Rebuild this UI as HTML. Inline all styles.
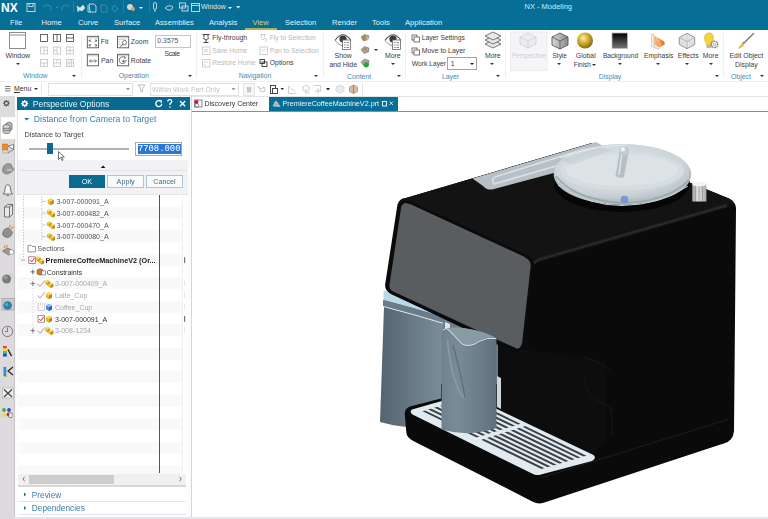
<!DOCTYPE html>
<html><head><meta charset="utf-8">
<style>
*{margin:0;padding:0;box-sizing:border-box}
html,body{width:768px;height:519px;overflow:hidden}
body{position:relative;font-family:"Liberation Sans",sans-serif;background:#fff;color:#333}
.a{position:absolute}
.t{position:absolute;white-space:nowrap;line-height:10px;height:10px}
svg{position:absolute;overflow:visible}
.rb{font-size:6.9px;color:#3c3c3c}
.dim{color:#b9b9b9}
.gl{font-size:6.9px;color:#3b8db3}
.tab{font-size:7.6px;color:#e6f0f4;top:18px}
.nv{font-size:7px;color:#333}
.ng{color:#a3a3a3}
.ar{position:absolute;width:0;height:0;border-left:2.2px solid transparent;border-right:2.2px solid transparent;border-top:2.6px solid #333}
.sep{position:absolute;width:1px;background:#efefef}
.wrapblur{position:absolute;left:0;top:0;width:768px;height:519px;filter:blur(0.3px)}
</style></head><body><div class="wrapblur">

<!-- ===== Title + tabs bar ===== -->
<div class="a" style="left:-4px;top:-4px;width:776px;height:34px;background:#076e96"></div>
<div class="t" style="left:1px;top:2px;font-size:12px;line-height:12px;height:12px;font-weight:bold;color:#fff">NX</div>
<div class="t" style="left:201px;top:2px;font-size:7px;color:#d8e8ef">Window</div>
<div class="t" style="left:524.5px;top:2px;font-size:7.5px;color:#d8e8ef">NX - Modeling</div>

<div class="t tab" style="left:10px">File</div>
<div class="t tab" style="left:41.5px">Home</div>
<div class="t tab" style="left:78px">Curve</div>
<div class="t tab" style="left:114px">Surface</div>
<div class="t tab" style="left:155px">Assemblies</div>
<div class="t tab" style="left:209px">Analysis</div>
<div class="t tab" style="left:252.5px;color:#d9cf7e">View</div>
<div class="t tab" style="left:285px">Selection</div>
<div class="t tab" style="left:332px">Render</div>
<div class="t tab" style="left:372px">Tools</div>
<div class="t tab" style="left:405px">Application</div>
<div class="a" style="left:245px;top:28px;width:32px;height:2px;background:#b3ad5c"></div>

<!-- ===== Ribbon ===== -->
<div class="a" style="left:0;top:30px;width:768px;height:52px;background:#fff;border-bottom:1px solid #eeedf0"></div>


<!-- Window group -->
<svg style="left:0;top:0" width="768" height="82">
 <rect x="9.5" y="32.5" width="16" height="16" fill="#fff" stroke="#8c8c8c" stroke-width="1"/>
 <line x1="9.5" y1="35" x2="25.5" y2="35" stroke="#8c8c8c" stroke-width="1"/>
 <g fill="#fff" stroke="#5a5a5a" stroke-width="0.9">
  <rect x="40.5" y="34.5" width="7" height="7"/><rect x="53.5" y="34.5" width="7" height="7"/><line x1="57" y1="34.5" x2="57" y2="41.5"/>
  <rect x="66.5" y="34.5" width="7" height="7"/><line x1="66.5" y1="38" x2="73.5" y2="38"/>
 </g>
 <g fill="#fff" stroke="#c9c9c9" stroke-width="0.9">
  <rect x="40.5" y="47" width="7" height="7"/><line x1="44" y1="47" x2="44" y2="54"/><line x1="44" y1="50.5" x2="47.5" y2="50.5"/>
  <rect x="53.5" y="47" width="7" height="7"/><line x1="57" y1="47" x2="57" y2="54"/><line x1="53.5" y1="50.5" x2="57" y2="50.5"/>
  <rect x="66.5" y="47" width="7" height="7"/><line x1="70" y1="47" x2="70" y2="54"/><line x1="66.5" y1="50.5" x2="73.5" y2="50.5"/>
  <rect x="40.5" y="59.5" width="7" height="7"/><line x1="40.5" y1="63" x2="47.5" y2="63"/><line x1="44" y1="63" x2="44" y2="66.5"/>
  <rect x="53.5" y="59.5" width="7" height="7"/><line x1="53.5" y1="63" x2="60.5" y2="63"/><line x1="57" y1="59.5" x2="57" y2="63"/>
  <rect x="66.5" y="59.5" width="7" height="7"/><line x1="69" y1="59.5" x2="69" y2="66.5"/><line x1="71.5" y1="59.5" x2="71.5" y2="66.5"/><line x1="66.5" y1="63" x2="73.5" y2="63"/>
 </g>
 <!-- Operation icons -->
 <g fill="#fff" stroke="#555" stroke-width="0.9">
  <rect x="87.3" y="36.3" width="11.2" height="11.5"/>
  <rect x="87.3" y="54.3" width="11.2" height="11.5"/>
  <rect x="117.5" y="36.3" width="11.2" height="11.5"/>
  <rect x="117.5" y="54.3" width="11.2" height="11.5"/>
 </g>
 <g stroke="#9a9a9a" stroke-width="0.6">
  <line x1="87.3" y1="37.8" x2="98.5" y2="37.8"/><line x1="87.3" y1="55.8" x2="98.5" y2="55.8"/>
  <line x1="117.5" y1="37.8" x2="128.7" y2="37.8"/><line x1="117.5" y1="55.8" x2="128.7" y2="55.8"/>
 </g>
 <g fill="none" stroke="#555" stroke-width="0.8">
  <path d="M89.2 40 l2 2 M89.2 40 h1.6 M89.2 40 v1.6 M96.6 40 l-2 2 M96.6 40 h-1.6 M96.6 40 v1.6 M89.2 46 l2 -2 M89.2 46 h1.6 M89.2 46 v-1.6 M96.6 46 l-2 -2 M96.6 46 h-1.6 M96.6 46 v-1.6"/>
  <path d="M89.5 61 h7 M89.5 61 l1.6 -1.6 M89.5 61 l1.6 1.6 M96.5 61 l-1.6 -1.6 M96.5 61 l-1.6 1.6"/>
  <path d="M126 60 a3.4 3.4 0 1 1 -1.5 -2.6"/><path d="M124 56.5 l1.5 1 l-1 1.5"/>
  <circle cx="123.5" cy="61.2" r="0.8" fill="#555"/>
 </g>
 <rect x="119.2" y="39.5" width="6.5" height="5.5" fill="none" stroke="#f0a060" stroke-width="0.8" stroke-dasharray="1.2 0.6"/>
 <circle cx="124.5" cy="42.5" r="2" fill="#fff" stroke="#555" stroke-width="0.7"/>
 <path d="M123 44 l-2.5 2.8" stroke="#555" stroke-width="0.9" fill="none"/>
 <rect x="155.5" y="35.5" width="35" height="12" fill="#fff" stroke="#c5c5c5" stroke-width="1"/>
 <!-- Content icons -->
 <g>
 <path d="M335 40.5 Q343 29 351 40.5" fill="none" stroke="#555" stroke-width="1.1"/>
 <path d="M335 40.5 Q341 47 345 46" fill="none" stroke="#777" stroke-width="0.8"/>
 <circle cx="343" cy="39" r="3.6" fill="#3a3a3a"/>
 <rect x="342.5" y="40" width="8" height="9.5" fill="#fff" stroke="#666" stroke-width="0.8"/>
 <path d="M344 42.5 h1.5 M346.5 42.5 h2.5 M344 45 h1.5 M346.5 45 h2.5 M344 47.5 h1.5 M346.5 47.5 h2.5" stroke="#555" stroke-width="0.7"/>
 <path d="M385 40.5 Q393 29 401 40.5" fill="none" stroke="#555" stroke-width="1.1"/>
 <path d="M385 40.5 Q391 47 395 46" fill="none" stroke="#777" stroke-width="0.8"/>
 <circle cx="393" cy="39" r="3.6" fill="#3a3a3a"/>
 <rect x="392.5" y="40" width="8" height="9.5" fill="#fff" stroke="#666" stroke-width="0.8"/>
 <path d="M394 42.5 h1.5 M396.5 42.5 h2.5 M394 45 h1.5 M396.5 45 h2.5 M394 47.5 h1.5 M396.5 47.5 h2.5" stroke="#555" stroke-width="0.7"/>
 <path d="M361 37 l3.5 -2.5 l4.5 1.5 l-1 3.5 l-4.5 1.5 z" fill="#9a8e80" stroke="#666" stroke-width="0.5"/><path d="M366 36.5 l2 1 l-1.5 3" stroke="#f2c230" stroke-width="1.3" fill="none"/>
 <path d="M361 49.5 l3.5 -3 l4.5 1.5 l-0.5 4 l-4.5 1.5 z" fill="#a8a29a" stroke="#666" stroke-width="0.5"/><path d="M362.5 49 l3 -1.5 l1 3" fill="#e07a30"/>
 <path d="M361 62 l3.5 -3 l4.5 1.5 l-0.5 4 l-4.5 1.5 z" fill="#a8a29a" stroke="#666" stroke-width="0.5"/><circle cx="366.3" cy="64.8" r="2.6" fill="#22a83a"/>
 </g>
 <!-- Layer icons -->
 <g fill="#fff" stroke="#555" stroke-width="0.8">
  <rect x="412" y="35" width="5" height="5"/><rect x="414" y="37" width="5.5" height="5"/>
  <rect x="412" y="48" width="5" height="5"/><rect x="414" y="50" width="5.5" height="5"/>
 </g>
 <rect x="447.5" y="57.5" width="29" height="12" fill="#fff" stroke="#a3a3a3" stroke-width="1"/>
 <g fill="#e9e9e9" stroke="#666" stroke-width="0.9">
  <path d="M485 44 l8 -4 l8 4 l-8 4z"/><path d="M485 40 l8 -4 l8 4 l-8 4z"/><path d="M485 36 l8 -4 l8 4 l-8 4z"/>
 </g>
 <!-- Display icons -->
 <rect x="510.5" y="32" width="36.5" height="38.5" fill="#f5f5f8" stroke="#e6e6ec" stroke-width="0.8"/>
 <g stroke="#cfcfd3" stroke-width="0.8" fill="#ececee"><path d="M520 37 l8 -4 l8 4 v7 l-8 4 l-8 -4z"/><path d="M520 37 l8 4 l8 -4 M528 41 v7" fill="none"/></g>
 <defs>
  <linearGradient id="stg" x1="0" x2="1"><stop offset="0" stop-color="#d8d8d8"/><stop offset="1" stop-color="#8a8a8a"/></linearGradient>
  <radialGradient id="sph" cx="0.4" cy="0.35" r="0.65"><stop offset="0" stop-color="#fff2b0"/><stop offset="0.45" stop-color="#d8b334"/><stop offset="1" stop-color="#8a6a10"/></radialGradient>
  <linearGradient id="bgg" x1="0" y1="0" x2="0" y2="1"><stop offset="0" stop-color="#000"/><stop offset="1" stop-color="#777"/></linearGradient>
 </defs>
 <path d="M552 37 l8 -4 l8 4 v8 l-8 4 l-8 -4z" fill="url(#stg)" stroke="#555" stroke-width="0.9"/>
 <path d="M552 37 l8 4 l8 -4 M560 41 v8" stroke="#555" stroke-width="0.8" fill="none"/>
 <circle cx="585" cy="40.5" r="8" fill="url(#sph)"/>
 <rect x="612" y="33" width="15.5" height="15.5" fill="url(#bgg)" stroke="#bdbdbd" stroke-width="0.8"/>
 <defs><linearGradient id="empg" x1="0" x2="1"><stop offset="0" stop-color="#f6c08a"/><stop offset="1" stop-color="#e8700f"/></linearGradient></defs>
 <path d="M651.5 34.5 L653.8 33.8 L654 46.5 L659.5 48.8 L657.5 49 L651.7 46.6 Z" fill="#f2f2f2" stroke="#b5b5b5" stroke-width="0.6"/>
 <path d="M654 35.5 L664 41.2 L665 44.2 L659.5 47.5 L654 44.8 Z" fill="url(#empg)"/>
 <path d="M656 37 L661 46.5" stroke="#f9d9b5" stroke-width="0.7"/>
 <path d="M679.3 37.5 L687 33.3 L694.7 37.5 V44.5 L687 48.7 L679.3 44.5 Z" fill="#e4e4e4" stroke="#8a8a8a" stroke-width="0.9"/>
 <path d="M679.3 37.5 L687 41.5 L694.7 37.5 M687 41.5 V48.5" stroke="#9a9a9a" stroke-width="0.6" fill="none"/>
 <path d="M679.3 44.5 L687 40.5 L694.7 44.5 M687 33.5 V40.5" stroke="#c4c4c4" stroke-width="0.5" fill="none"/>
 <path d="M704.5 38.5 Q704.5 33 709 33 Q713.5 33 713.5 38.5 Q713.5 41 711.8 43 V45 H706.3 V43 Q704.5 41 704.5 38.5 Z" fill="#f6d23c" stroke="#d6ad1e" stroke-width="0.6"/>
 <rect x="706.5" y="45" width="5" height="3" fill="#b9b9b9"/>
 <circle cx="714.5" cy="44.3" r="3.2" fill="#fff" stroke="#777" stroke-width="1.4" stroke-dasharray="1.1 0.5"/>
 <circle cx="714.5" cy="44.3" r="1.2" fill="none" stroke="#777" stroke-width="0.6"/>
 <path d="M753.5 33.5 L744 43" stroke="#7d7d7d" stroke-width="1.5" stroke-linecap="round"/>
 <path d="M744.5 42 L742 44.5" stroke="#9a9a9a" stroke-width="2.2"/>
 <path d="M742.8 43.2 Q739 46 738.5 48.5 Q741.5 48 744 45 Z" fill="#e8c53a" stroke="#c9a21c" stroke-width="0.4"/>
 <!-- QAT icons -->
 <g stroke="#bcd3de" fill="none" stroke-width="1">
  <rect x="27" y="3.5" width="8" height="8"/><rect x="29" y="3.5" width="4" height="3"/>
  <path d="M89 4 h5 l2 2 v6 h-6z M88 5 v7 h3"/>
 </g>
 <g stroke="#3f8aac" fill="none" stroke-width="1">
  <path d="M43 7 q4 -4 8 0 v4"/><path d="M56 7 l1 1 l1 -1" /><path d="M70 7 q-4 -4 -8 0 v4"/>
  <path d="M101 5 h4 l2 2 v5 h-6z"/><path d="M114 5 l4 4 l-3 3 l-3 -3z"/>
 </g>
 <path d="M77 6 l3 2 l3 -3 l2 3 l-3 3 l-3 -1 l-1 2z" fill="#d9e6ec" stroke="#d9e6ec" stroke-width="0.5"/>
 <circle cx="130" cy="7" r="3" fill="#d6d6d6"/><circle cx="133" cy="9" r="2" fill="#d3a56a"/>
 <path d="M139 7 h4 l-2 2z" fill="#fff"/><path d="M228 7 h4 l-2 2z" fill="#fff"/><path d="M236 6 h4.5 l-2.25 2.5z" fill="#cfe0e8"/>
 <rect x="153.5" y="2.5" width="3" height="7" rx="1.5" fill="none" stroke="#cfe0e8" stroke-width="0.9"/><path d="M155 10 v2" stroke="#cfe0e8"/>
 <path d="M165 8 q4 -4 8 -1 l-2 3 q-3 1 -6 -2z" fill="none" stroke="#cfe0e8" stroke-width="0.9"/>
 <rect x="179.5" y="3" width="6" height="5" fill="none" stroke="#cfe0e8" stroke-width="0.9"/><rect x="182" y="6" width="6" height="5" fill="none" stroke="#cfe0e8" stroke-width="0.9"/>
 <rect x="191.5" y="3.5" width="8" height="8" fill="none" stroke="#cfe0e8" stroke-width="0.9"/><line x1="191.5" y1="5.5" x2="199.5" y2="5.5" stroke="#cfe0e8" stroke-width="0.9"/>
 <line x1="73.5" y1="1" x2="73.5" y2="13" stroke="#2b7da0" stroke-width="1"/>
 <line x1="123.5" y1="1" x2="123.5" y2="13" stroke="#2b7da0" stroke-width="1"/>
 <line x1="149.5" y1="1" x2="149.5" y2="13" stroke="#2b7da0" stroke-width="1"/>
</svg>

<div class="t rb" style="left:5.5px;top:50.8px">Window</div>
<div class="ar" style="left:15.8px;top:62.5px"></div>
<div class="t gl" style="left:23px;top:71.4px">Window</div>
<div class="ar" style="left:71.8px;top:75px"></div>
<div class="sep" style="left:80.5px;top:33px;height:45px"></div>

<div class="t rb" style="left:100.8px;top:37px">Fit</div>
<div class="t rb" style="left:101px;top:55.5px">Pan</div>
<div class="t rb" style="left:130.8px;top:37px">Zoom</div>
<div class="t rb" style="left:130.8px;top:55.5px">Rotate</div>
<div class="t rb" style="left:157.3px;top:36px;color:#555">0.3575</div>
<div class="t rb" style="left:164.6px;top:49.4px;letter-spacing:-0.45px">Scale</div>
<div class="t gl" style="left:118.7px;top:71.4px">Operation</div>
<div class="ar" style="left:187.8px;top:75px"></div>
<div class="sep" style="left:196.4px;top:33px;height:45px"></div>


<svg style="left:0;top:0" width="330" height="82">
 <g fill="none" stroke="#333" stroke-width="0.9">
  <path d="M202.5 34.5 h7 M204 34.5 v3 M208 34.5 v3 M203 38 l3 2 l3 -2 M206 40 v2.5 M203.5 42.5 h5"/>
 </g>
 <g fill="none" stroke="#c5c5c5" stroke-width="0.8">
  <rect x="202.5" y="47" width="7.5" height="7.5"/><path d="M204 49.5 h4 M204 51.5 h4"/>
  <rect x="202.5" y="59.5" width="7.5" height="7.5"/><path d="M204 62 h4 M204 64 l2 2"/>
  <path d="M260 34.5 h6 M261.5 34.5 v3 M264.5 34.5 v3 M261 38 l2 2 l2 -2 l2 2 l-2 2"/>
  <rect x="260" y="47" width="7.5" height="7.5"/><path d="M261.5 49 l2 2 l2 -2"/>
 </g>
 <g fill="none" stroke="#333" stroke-width="0.9">
  <rect x="260" y="59.5" width="4.5" height="4"/><rect x="262" y="62" width="5" height="4.5"/>
 </g>
</svg>
<div class="t rb" style="left:212.3px;top:33px">Fly-through</div>
<div class="t rb dim" style="left:212.3px;top:45.8px;font-size:6.7px">Save Home</div>
<div class="t rb dim" style="left:212.3px;top:58.2px;font-size:6.75px">Restore Home</div>
<div class="t rb dim" style="left:269.7px;top:33px;font-size:6.75px">Fly to Selection</div>
<div class="t rb dim" style="left:269.7px;top:45.8px;font-size:6.75px">Pan to Selection</div>
<div class="t rb" style="left:269.7px;top:58.2px">Options</div>
<div class="t gl" style="left:238.7px;top:71.3px">Navigation</div>
<div class="ar" style="left:313.8px;top:75px"></div>
<div class="sep" style="left:323.4px;top:33px;height:45px"></div>

<div class="t rb" style="left:334.6px;top:50.7px">Show</div>
<div class="t rb" style="left:329.4px;top:60px">and Hide</div>
<div class="ar" style="left:373.6px;top:49px"></div>
<div class="t rb" style="left:385px;top:50.7px">More</div>
<div class="ar" style="left:390.8px;top:62.8px"></div>
<div class="t gl" style="left:347px;top:71.5px">Content</div>
<div class="ar" style="left:396.5px;top:75px"></div>
<div class="sep" style="left:405.4px;top:33px;height:45px"></div>

<div class="t rb" style="left:421.7px;top:33px;font-size:6.75px">Layer Settings</div>
<div class="t rb" style="left:421.7px;top:45.9px">Move to Layer</div>
<div class="t rb" style="left:411.7px;top:59px;font-size:6.75px">Work Layer</div>
<div class="t rb" style="left:450.8px;top:58.6px">1</div>
<div class="ar" style="left:470.3px;top:62.5px;border-top-color:#222"></div>
<div class="t rb" style="left:485px;top:50.7px">More</div>
<div class="ar" style="left:490.3px;top:62.8px"></div>
<div class="t gl" style="left:441.9px;top:71.5px">Layer</div>
<div class="ar" style="left:495.8px;top:75px"></div>
<div class="sep" style="left:505.4px;top:33px;height:45px"></div>

<div class="t rb" style="left:511.7px;top:50.7px;color:#d0d0d4;font-size:6.6px">Perspective</div>
<div class="t rb" style="left:552.6px;top:50.7px;font-size:6.4px">Style</div>
<div class="ar" style="left:557.4px;top:62.8px"></div>
<div class="t rb" style="left:575.8px;top:50.7px">Global</div>
<div class="t rb" style="left:573.8px;top:60px;font-size:6.4px">Finish</div>
<div class="ar" style="left:592px;top:64px"></div>
<div class="t rb" style="left:602.9px;top:50.7px;font-size:6.6px">Background</div>
<div class="ar" style="left:618.3px;top:62.8px"></div>
<div class="t rb" style="left:644px;top:50.7px;font-size:6.7px">Emphasis</div>
<div class="ar" style="left:655.8px;top:62.8px"></div>
<div class="t rb" style="left:677.8px;top:50.7px">Effects</div>
<div class="ar" style="left:684.8px;top:62.8px"></div>
<div class="t rb" style="left:702.8px;top:50.7px">More</div>
<div class="ar" style="left:708.8px;top:62.8px"></div>
<div class="t gl" style="left:598.7px;top:71.5px">Display</div>
<div class="ar" style="left:714.5px;top:75px"></div>
<div class="sep" style="left:723px;top:33px;height:45px"></div>
<div class="t rb" style="left:729.5px;top:50.7px">Edit Object</div>
<div class="t rb" style="left:735px;top:60px">Display</div>
<div class="t gl" style="left:731px;top:71.5px">Object</div>
<div class="ar" style="left:759.5px;top:75px"></div>

<!-- ===== Toolbar row ===== -->
<div class="a" style="left:0;top:82px;width:768px;height:14px;background:#fff"></div>

<!-- ===== Main ===== -->
<div class="a" style="left:-4px;top:96px;width:18px;height:427px;background:#dcdadc"></div>
<div class="a" style="left:13.8px;top:96px;width:3.2px;height:423px;background:#fbfbfc;border-left:1px solid #c9c7ca"></div>
<div class="a" style="left:17.3px;top:96px;width:0.8px;height:423px;background:#ececee"></div>
<div class="a" style="left:17px;top:96px;width:171px;height:423px;background:#fff"></div>
<div class="a" style="left:188px;top:96px;width:3px;height:423px;background:#fcfcfd"></div>
<div class="a" style="left:191px;top:96px;width:1px;height:423px;background:#d6d6da"></div>
<div class="a" style="left:14px;top:517.3px;width:758px;height:6px;background:#e6e6ea"></div>


<!-- toolbar row content -->
<svg style="left:0;top:0" width="768" height="100">
 <path d="M5 86.5 h5.5 M5 88.7 h5.5 M5 90.9 h5.5" stroke="#555" stroke-width="0.8"/>
 <line x1="41.5" y1="83" x2="41.5" y2="95" stroke="#e6e6e6"/>
 <rect x="48.5" y="83.5" width="84" height="12" fill="#fff" stroke="#e0e0e0"/>
 <path d="M126 88 h4 l-2 2.4z" fill="#9a9a9a"/>
 <path d="M138 85 h7 l-2.5 3 v4 l-2 -1 v-3z" fill="none" stroke="#a9a9a9" stroke-width="0.8"/>
 <rect x="150.5" y="83.5" width="88" height="12" fill="#fff" stroke="#e0e0e0"/>
 <path d="M231.5 88 h4 l-2 2.4z" fill="#9a9a9a"/>
 <rect x="243.5" y="83.5" width="11" height="12" fill="#f6f8fa" stroke="#dfe6ea"/>
 <path d="M246.5 87 h5 l-0.6 5.5 h-3.8z" fill="#c9c9c9"/>
 <path d="M258 86 l3 3 l3 -2 l1 4 l-4 1z" fill="none" stroke="#bdbdbd" stroke-width="0.8"/>
 <rect x="270.5" y="85.5" width="5" height="8" fill="none" stroke="#333" stroke-width="0.9"/><rect x="272.5" y="88.5" width="5" height="5" fill="#fff" stroke="#333" stroke-width="0.9"/>
 <path d="M280.5 88 h3.5 l-1.75 2z" fill="#222"/>
 <path d="M288.5 85.5 v8 h8 M290 87 l5 5" fill="none" stroke="#c3c3c3" stroke-width="0.8"/>
 <path d="M303 87 l3 -2 l3 2 v3 l-3 2 l-3 -2z M306 89 v4 h4" fill="none" stroke="#c3c3c3" stroke-width="0.8"/>
 <path d="M314.5 85.5 h6 v6 M318 88 v6 M315 91 h6" fill="none" stroke="#c3c3c3" stroke-width="0.8"/>
 <path d="M326 88 h4 l-2 2.4z" fill="#222"/>
 <path d="M336 87 l4 -2 l4 2 v4 l-4 2 l-4 -2z" fill="#ececec" stroke="#cfcfcf" stroke-width="0.8"/>
 <path d="M349.5 87 l4 -2 l4 2 v4.5 l-4 2 l-4 -2z" fill="#e0b9a0" stroke="#999" stroke-width="0.8"/><path d="M353.5 85 v8.5" stroke="#e0702a" stroke-width="1"/>
 <line x1="362.5" y1="83" x2="362.5" y2="95" stroke="#e6e6e6"/>
</svg>
<div class="t rb" style="left:14px;top:84.3px;color:#333"><span style="text-decoration:underline">M</span>enu</div>
<div class="ar" style="left:34px;top:88px"></div>
<div class="t rb" style="left:152px;top:84.5px;color:#c4c4c4">Within Work Part Only</div>

<!-- Left icon strip -->
<div class="a" style="left:0;top:96px;width:15px;height:20px;background:#dcdcdc"></div>
<div class="a" style="left:1px;top:117px;width:14.5px;height:22px;background:#fff"></div>


<svg style="left:0;top:0" width="20" height="519">
 <path d="M9.65 102.71 L9.65 103.89 L8.84 103.83 L8.50 104.65 L9.11 105.18 L8.28 106.01 L7.75 105.40 L6.93 105.74 L6.99 106.55 L5.81 106.55 L5.87 105.74 L5.05 105.40 L4.52 106.01 L3.69 105.18 L4.30 104.65 L3.96 103.83 L3.15 103.89 L3.15 102.71 L3.96 102.77 L4.30 101.95 L3.69 101.42 L4.52 100.59 L5.05 101.20 L5.87 100.86 L5.81 100.05 L6.99 100.05 L6.93 100.86 L7.75 101.20 L8.28 100.59 L9.11 101.42 L8.50 101.95 L8.84 102.77 Z" fill="#555"/><circle cx="6.4" cy="103.3" r="1.2" fill="#dcdadc"/>
 <!-- stack -->
 <g fill="#bdbdbd" stroke="#5a5a5a" stroke-width="0.7">
  <path d="M6 123.5 l3 -1.5 l3 1.5 v6 l-3 1.5 l-3 -1.5z"/>
  <path d="M3 126 q0 -1.5 3.5 -1.5 q3.5 0 3.5 1.5 v6 q0 1.5 -3.5 1.5 q-3.5 0 -3.5 -1.5z" fill="#d0d0d0"/>
  <path d="M3 128 q3.5 2 7 0 M3 130 q3.5 2 7 0" fill="none"/>
 </g>
 <!-- assembly orange -->
 <rect x="2.5" y="144" width="5" height="6" fill="#f08a24" stroke="#c96a10" stroke-width="0.5"/>
 <path d="M8 146 l5.5 3.5 v-5z M8 153 l5.5 -3.5" fill="#fff" stroke="#555" stroke-width="0.7"/>
 <rect x="3" y="150" width="5" height="3" fill="#ddd" stroke="#888" stroke-width="0.5"/>
 <!-- blob -->
 <path d="M2.5 171 q0 -7 6 -7.5 q3 0 3.5 3 l2 3 q-2 3 -6 4.5 q-5 0 -5.5 -3z" fill="#9a9a9a" stroke="#666" stroke-width="0.6"/>
 <path d="M7 170 h5" stroke="#ddd" stroke-width="1"/>
 <!-- bell -->
 <path d="M3 194 q2 -1.5 2 -5 q0 -4 2.8 -4.5 q2.8 0.5 2.8 4.5 q0 3.5 2 5z" fill="#f4f4f4" stroke="#555" stroke-width="0.8"/>
 <path d="M6.5 195.5 h2.6" stroke="#555" stroke-width="0.8"/>
 <!-- box -->
 <path d="M4.5 207 l3 -2.5 h5 v10 l-3 2.5 h-5z M4.5 207 h5 l3 -2.5 M9.5 207 v10" fill="#e8e8e8" stroke="#555" stroke-width="0.8"/>
 <!-- orange tipped -->
 <path d="M2.5 234 q1 -6 6 -6 l4 4 q-1 5 -5 5.5 q-4 0 -5 -3.5z" fill="#8f8f8f" stroke="#555" stroke-width="0.6"/>
 <path d="M9 228 l1.5 -3 M11 229 l2.5 -2.5" stroke="#f08a24" stroke-width="1.2"/>
 <path d="M2.5 251 l5 -3 l6 3 l-5 4z" fill="#9a9a9a" stroke="#555" stroke-width="0.6"/>
 <circle cx="11.5" cy="252" r="2.3" fill="#fff" stroke="#777" stroke-width="0.5"/>
 <path d="M4 248 l1 -2.5 M6 247.5 l1.5 -2.5" stroke="#f08a24" stroke-width="1.1"/>
 <!-- sphere -->
 <circle cx="6.6" cy="279" r="4.5" fill="#7a7a7a"/><circle cx="5.5" cy="277.5" r="2" fill="#9a9a9a"/>
 <path d="M9 273 q4 1.5 4.5 5" fill="none" stroke="#bbb" stroke-width="0.6"/>
 <!-- globe boxed -->
 <rect x="2" y="298.6" width="12.3" height="11.4" fill="#c8c8c8" stroke="#9a9a9a" stroke-width="0.6"/>
 <circle cx="7.6" cy="305.5" r="4.3" fill="#2b7ea6"/><circle cx="6.6" cy="304.5" r="1.8" fill="#58a8c8"/>
 <!-- clock -->
 <circle cx="7.5" cy="331.4" r="5.2" fill="none" stroke="#555" stroke-width="0.7"/>
 <path d="M7.5 327.5 v4 h-2.5" fill="none" stroke="#555" stroke-width="0.7"/>
 <!-- rainbow -->
 <rect x="3" y="346" width="3.8" height="2.5" fill="#f04020"/><rect x="3" y="348.5" width="3.8" height="2.5" fill="#f0e020"/>
 <rect x="3" y="351" width="3.8" height="2.5" fill="#30d040"/><rect x="3" y="353.5" width="3.8" height="3" fill="#2040f0"/>
 <path d="M8 349.5 l3.5 6.5" stroke="#222" stroke-width="1.4"/>
 <!-- K icon -->
 <rect x="3.5" y="367" width="2.8" height="9" fill="#3a8ad0"/><path d="M4 376.5 h3" stroke="#9cd040" stroke-width="1"/>
 <path d="M13 367 l-5 4 l5 4" fill="none" stroke="#222" stroke-width="1.2"/>
 <!-- tools -->
 <rect x="2.5" y="388" width="11" height="10" fill="#eee" stroke="#aaa" stroke-width="0.6"/>
 <path d="M4 389.5 l8 7.5 M12 389.5 l-8 7.5" stroke="#444" stroke-width="1.2"/>
 <!-- balls -->
 <circle cx="4" cy="410" r="1.9" fill="#3fae3f"/><circle cx="9" cy="410" r="1.9" fill="#2a4fd0"/>
 <circle cx="4" cy="414.8" r="1.9" fill="#f0e030"/><circle cx="8.5" cy="414.5" r="1.9" fill="#d82a2a"/>
 <path d="M9 413 h3 v4.5 h-3z" fill="#fff" stroke="#555" stroke-width="0.6"/>
</svg>

<!-- Tab bar -->
<div class="a" style="left:192px;top:96.2px;width:576px;height:1px;background:#e4e4e6"></div>
<div class="a" style="left:192px;top:110.6px;width:576px;height:1.4px;background:#6c98aa"></div>
<svg style="left:0;top:0" width="768" height="120">
 <rect x="194.5" y="100" width="7.5" height="7" fill="#fff" stroke="#666" stroke-width="0.8"/>
 <circle cx="196.5" cy="102" r="2" fill="#e0102a"/><circle cx="197" cy="105.5" r="1.8" fill="none" stroke="#555" stroke-width="0.6"/>
</svg>
<div class="t" style="left:204.5px;top:99.4px;font-size:7px;color:#333">Discovery Center</div>
<div class="a" style="left:268.8px;top:96.7px;width:129px;height:14.3px;background:#076e96"></div>
<svg style="left:0;top:0" width="768" height="120">
 <path d="M273 106 l2.5 -4.5 l2 1 l1.5 2.5 l1 1.5 z" fill="#aab5bb" stroke="#d0d8dc" stroke-width="0.6"/><path d="M274.5 102.5 l2 -1.5" stroke="#c8d0d4" stroke-width="1"/>
 <rect x="382.5" y="101.5" width="4" height="4.5" fill="none" stroke="#fff" stroke-width="0.9"/>
 <path d="M389.5 101.5 l3.5 3.5 M393 101.5 l-3.5 3.5" stroke="#e6eef2" stroke-width="0.9"/>
</svg>
<div class="t" style="left:282.5px;top:98.5px;font-size:7.2px;color:#f1f6f9">PremiereCoffeeMachineV2.prt</div>

<!-- Dialog -->
<div class="a" style="left:17px;top:97px;width:173.3px;height:13px;background:#096a91"></div>
<svg style="left:0;top:0" width="200" height="200">
 <path d="M28.24 102.96 L28.24 104.24 L27.34 104.17 L26.97 105.06 L27.66 105.65 L26.75 106.56 L26.16 105.87 L25.27 106.24 L25.34 107.14 L24.06 107.14 L24.13 106.24 L23.24 105.87 L22.65 106.56 L21.74 105.65 L22.43 105.06 L22.06 104.17 L21.16 104.24 L21.16 102.96 L22.06 103.03 L22.43 102.14 L21.74 101.55 L22.65 100.64 L23.24 101.33 L24.13 100.96 L24.06 100.06 L25.34 100.06 L25.27 100.96 L26.16 101.33 L26.75 100.64 L27.66 101.55 L26.97 102.14 L27.34 103.03 Z" fill="#fff"/><circle cx="24.7" cy="103.6" r="1.2" fill="#096a91"/>
 <path d="M161.8 103.8 a3 3 0 1 1 -1.2 -2.6" fill="none" stroke="#fff" stroke-width="1.3"/>
 <path d="M159.3 100.2 l2.2 0.6 l-0.6 2.2" fill="none" stroke="#fff" stroke-width="1.1"/>
 <path d="M167.8 101.6 q0 -2 2 -2 q2 0 2 2 q0 1.4 -1.8 2.1 v1.2" fill="none" stroke="#fff" stroke-width="1.3"/><circle cx="170" cy="107" r="0.8" fill="#fff"/>
 <path d="M180 101 l5.2 5.2 M185.2 101 l-5.2 5.2" stroke="#fff" stroke-width="1.3"/>
</svg>
<div class="t" style="left:32.8px;top:98.5px;font-size:8.55px;color:#e6f1f6">Perspective Options</div>
<div class="a" style="left:17px;top:110px;width:171px;height:50px;background:#fff;border-left:1px solid #e3e3e3"></div>
<svg style="left:0;top:0" width="40" height="130"><path d="M24.2 118 h5 l-2.5 2.6z" fill="#1f6f96"/></svg>
<div class="t" style="left:33.7px;top:114.4px;font-size:8.68px;color:#3585ad">Distance from Camera to Target</div>
<div class="t" style="left:24.5px;top:130px;font-size:7.33px;color:#444">Distance to Target</div>
<div class="a" style="left:28.5px;top:148px;width:100.3px;height:2px;background:#b3b3b3"></div>
<div class="a" style="left:46.8px;top:143.2px;width:6.6px;height:11.3px;background:#0d6a8e"></div>
<div class="a" style="left:134.7px;top:142.3px;width:47.6px;height:13.3px;background:#fff;border:1px solid #a9a9a9"></div>
<div class="a" style="left:137.7px;top:144px;width:43.2px;height:10px;background:#2b78d4"></div>
<div class="t" style="left:137.9px;top:144px;font-size:8.9px;font-family:'Liberation Mono',monospace;color:#fff">7708.000</div>
<div class="a" style="left:17px;top:160px;width:171px;height:33.5px;background:#f2f2f4;border-left:1px solid #e3e3e3"></div>
<div class="a" style="left:19.5px;top:170px;width:167px;height:1px;background:#e2e2e6"></div>
<svg style="left:0;top:0" width="200" height="200">
 <path d="M100.8 168 h4.6 l-2.3 -2.4z" fill="#111"/>
 <path d="M58.5 151.5 v8 l2 -2 l1.6 3 l1 -0.6 l-1.5 -2.8 h2.7z" fill="#fff" stroke="#333" stroke-width="0.7"/>
</svg>
<div class="a" style="left:68.8px;top:175px;width:36.2px;height:13.4px;background:#0b6a90"></div>
<div class="t" style="left:68.8px;top:177.2px;width:36.2px;text-align:center;font-size:7.2px;color:#fff">OK</div>
<div class="a" style="left:107.4px;top:175px;width:36.4px;height:13.4px;background:#f9fafb;border:1px solid #a8c6d4"></div>
<div class="t" style="left:107.4px;top:177.2px;width:36.4px;text-align:center;font-size:7.2px;color:#3f6f88">Apply</div>
<div class="a" style="left:146.2px;top:175px;width:36.7px;height:13.4px;background:#f9fafb;border:1px solid #a8c6d4"></div>
<div class="t" style="left:146.2px;top:177.2px;width:36.7px;text-align:center;font-size:7.2px;color:#3f6f88">Cancel</div>
<div class="a" style="left:17px;top:193.5px;width:171px;height:1px;background:#e6e6e6"></div>


<!-- Navigator -->
<div class="a" style="left:18px;top:206.75px;width:164px;height:11.75px;background:#f9f8fb"></div>
<div class="a" style="left:18px;top:230.25px;width:164px;height:11.75px;background:#f9f8fb"></div>
<div class="a" style="left:18px;top:253.75px;width:164px;height:11.75px;background:#f9f8fb"></div>
<div class="a" style="left:18px;top:277.25px;width:164px;height:11.75px;background:#f9f8fb"></div>
<div class="a" style="left:18px;top:300.75px;width:164px;height:11.75px;background:#f9f8fb"></div>
<div class="a" style="left:18px;top:324.25px;width:164px;height:11.75px;background:#f9f8fb"></div>
<div class="a" style="left:18px;top:347.75px;width:164px;height:11.75px;background:#f9f8fb"></div>
<div class="a" style="left:18px;top:371.25px;width:164px;height:11.75px;background:#f9f8fb"></div>
<div class="a" style="left:18px;top:394.75px;width:164px;height:11.75px;background:#f9f8fb"></div>
<div class="a" style="left:18px;top:418.25px;width:164px;height:11.75px;background:#f9f8fb"></div>
<div class="a" style="left:18px;top:441.75px;width:164px;height:11.75px;background:#f9f8fb"></div>
<div class="a" style="left:18px;top:465.25px;width:164px;height:8.25px;background:#f9f8fb"></div>
<div class="a" style="left:159px;top:195px;width:1px;height:278px;background:#555"></div>
<div class="a" style="left:182px;top:195px;width:1px;height:278px;background:#f0f0f0"></div>
<div class="t nv" style="left:56.4px;top:197.20px;color:#555;">3-007-000091_A</div>
<div class="t nv" style="left:56.4px;top:208.95px;color:#555;">3-007-000482_A</div>
<div class="t nv" style="left:56.4px;top:220.70px;color:#555;">3-007-000470_A</div>
<div class="t nv" style="left:56.4px;top:232.45px;color:#555;">3-007-000080_A</div>
<div class="t nv" style="left:37.6px;top:244.20px;color:#555;">Sections</div>
<div class="t nv" style="left:45.6px;top:255.95px;color:#555;font-weight:bold;color:#222;font-size:7.25px">PremiereCoffeeMachineV2 (Or...</div>
<div class="t nv" style="left:46.8px;top:267.70px;color:#555;color:#333">Constraints</div>
<div class="t nv" style="left:55px;top:279.45px;color:#555;color:#a8a8a8">3-007-000409_A</div>
<div class="t nv" style="left:55px;top:291.20px;color:#555;color:#a8a8a8">Latte_Cup</div>
<div class="t nv" style="left:55px;top:302.95px;color:#555;color:#a8a8a8">Coffee_Cup</div>
<div class="t nv" style="left:55px;top:314.70px;color:#555;color:#333">3-007-000091_A</div>
<div class="t nv" style="left:55px;top:326.45px;color:#555;color:#a8a8a8">3-008-1234</div>
<svg style="left:0;top:0" width="200" height="519">
<path d="M23.5 196 V258 M41.7 196 V241" stroke="#bdbdbd" stroke-width="0.8" stroke-dasharray="1.5 1.5" fill="none"/>
<path d="M33 264 V336" stroke="#cfcfcf" stroke-width="0.8" stroke-dasharray="1.5 1.5" fill="none"/>
<path d="M42 201.40 h4" stroke="#bbb" stroke-width="0.8"/>
<path d="M47.70 199.80 L50.70 198.20 L53.70 199.80 L53.70 203.60 L50.70 205.20 L47.70 203.60 Z" fill="#e8b82a"/><path d="M50.70 201.40 L53.70 199.80 L53.70 203.60 L50.70 205.20 Z" fill="#b98a10"/><path d="M47.70 199.80 L50.70 201.40 L53.70 199.80 L50.70 198.20 Z" fill="#f6d86a"/>
<path d="M42 213.15 h4" stroke="#bbb" stroke-width="0.8"/>
<path d="M46.96 210.70 L49.30 209.45 L51.64 210.70 L51.64 213.67 L49.30 214.91 L46.96 213.67 Z" fill="#e8b82a"/><path d="M49.30 211.95 L51.64 210.70 L51.64 213.67 L49.30 214.91 Z" fill="#b98a10"/><path d="M46.96 210.70 L49.30 211.95 L51.64 210.70 L49.30 209.45 Z" fill="#f6d86a"/><path d="M50.20 213.17 L52.60 211.89 L55.00 213.17 L55.00 216.21 L52.60 217.49 L50.20 216.21 Z" fill="#e8b82a"/><path d="M52.60 214.45 L55.00 213.17 L55.00 216.21 L52.60 217.49 Z" fill="#b98a10"/><path d="M50.20 213.17 L52.60 214.45 L55.00 213.17 L52.60 211.89 Z" fill="#f6d86a"/>
<path d="M42 224.90 h4" stroke="#bbb" stroke-width="0.8"/>
<path d="M46.96 222.45 L49.30 221.20 L51.64 222.45 L51.64 225.42 L49.30 226.66 L46.96 225.42 Z" fill="#e8b82a"/><path d="M49.30 223.70 L51.64 222.45 L51.64 225.42 L49.30 226.66 Z" fill="#b98a10"/><path d="M46.96 222.45 L49.30 223.70 L51.64 222.45 L49.30 221.20 Z" fill="#f6d86a"/><path d="M50.20 224.92 L52.60 223.64 L55.00 224.92 L55.00 227.96 L52.60 229.24 L50.20 227.96 Z" fill="#e8b82a"/><path d="M52.60 226.20 L55.00 224.92 L55.00 227.96 L52.60 229.24 Z" fill="#b98a10"/><path d="M50.20 224.92 L52.60 226.20 L55.00 224.92 L52.60 223.64 Z" fill="#f6d86a"/>
<path d="M42 236.65 h4" stroke="#bbb" stroke-width="0.8"/>
<path d="M46.96 234.20 L49.30 232.95 L51.64 234.20 L51.64 237.17 L49.30 238.41 L46.96 237.17 Z" fill="#e8b82a"/><path d="M49.30 235.45 L51.64 234.20 L51.64 237.17 L49.30 238.41 Z" fill="#b98a10"/><path d="M46.96 234.20 L49.30 235.45 L51.64 234.20 L49.30 232.95 Z" fill="#f6d86a"/><path d="M50.20 236.67 L52.60 235.39 L55.00 236.67 L55.00 239.71 L52.60 240.99 L50.20 239.71 Z" fill="#e8b82a"/><path d="M52.60 237.95 L55.00 236.67 L55.00 239.71 L52.60 240.99 Z" fill="#b98a10"/><path d="M50.20 236.67 L52.60 237.95 L55.00 236.67 L52.60 235.39 Z" fill="#f6d86a"/>
<path d="M28 245.40 h3 l1 1 h3.5 v5.5 h-7.5z" fill="#fff" stroke="#666" stroke-width="0.7"/>
<path d="M21 260.15 h4" stroke="#999" stroke-width="0.8"/>
<rect x="28.8" y="256.85" width="6.5" height="6.5" fill="#fff" stroke="#666" stroke-width="0.7"/><path d="M30 260.15 l1.6 1.8 l3 -4" stroke="#e0202a" stroke-width="1" fill="none"/>
<path d="M36.06 257.70 L38.40 256.45 L40.74 257.70 L40.74 260.67 L38.40 261.91 L36.06 260.67 Z" fill="#e8b82a"/><path d="M38.40 258.95 L40.74 257.70 L40.74 260.67 L38.40 261.91 Z" fill="#b98a10"/><path d="M36.06 257.70 L38.40 258.95 L40.74 257.70 L38.40 256.45 Z" fill="#f6d86a"/><path d="M39.30 260.17 L41.70 258.89 L44.10 260.17 L44.10 263.21 L41.70 264.49 L39.30 263.21 Z" fill="#e8b82a"/><path d="M41.70 261.45 L44.10 260.17 L44.10 263.21 L41.70 264.49 Z" fill="#b98a10"/><path d="M39.30 260.17 L41.70 261.45 L44.10 260.17 L41.70 258.89 Z" fill="#f6d86a"/>
<path d="M30.5 271.90 h4.5 M32.75 269.65 v4.5" stroke="#555" stroke-width="0.8"/>
<circle cx="40" cy="271.90" r="3.2" fill="#d2763a" stroke="#555" stroke-width="0.5"/><rect x="41.5" y="270.90" width="4" height="4" fill="#fff" stroke="#555" stroke-width="0.6"/>
<path d="M30.5 283.65 h4.5 M32.75 281.40 v4.5" stroke="#666" stroke-width="0.8"/>
<path d="M37.5 283.65 l2.5 2.8 l4.8 -6" stroke="#9a9a9a" stroke-width="0.9" fill="none"/>
<path d="M45.26 281.20 L47.60 279.95 L49.94 281.20 L49.94 284.17 L47.60 285.41 L45.26 284.17 Z" fill="#e8b82a"/><path d="M47.60 282.45 L49.94 281.20 L49.94 284.17 L47.60 285.41 Z" fill="#b98a10"/><path d="M45.26 281.20 L47.60 282.45 L49.94 281.20 L47.60 279.95 Z" fill="#f6d86a"/><path d="M48.50 283.67 L50.90 282.39 L53.30 283.67 L53.30 286.71 L50.90 287.99 L48.50 286.71 Z" fill="#e8b82a"/><path d="M50.90 284.95 L53.30 283.67 L53.30 286.71 L50.90 287.99 Z" fill="#b98a10"/><path d="M48.50 283.67 L50.90 284.95 L53.30 283.67 L50.90 282.39 Z" fill="#f6d86a"/>
<path d="M37.5 295.40 l2.5 2.8 l4.8 -6" stroke="#9a9a9a" stroke-width="0.9" fill="none"/>
<path d="M46.00 293.80 L49.00 292.20 L52.00 293.80 L52.00 297.60 L49.00 299.20 L46.00 297.60 Z" fill="#e8b82a"/><path d="M49.00 295.40 L52.00 293.80 L52.00 297.60 L49.00 299.20 Z" fill="#b98a10"/><path d="M46.00 293.80 L49.00 295.40 L52.00 293.80 L49.00 292.20 Z" fill="#f6d86a"/>
<rect x="38" y="303.95" width="6.5" height="6.5" fill="none" stroke="#888" stroke-width="0.7" stroke-dasharray="1 1"/>
<path d="M46.00 305.55 L49.00 303.95 L52.00 305.55 L52.00 309.35 L49.00 310.95 L46.00 309.35 Z" fill="#4a86e8"/><path d="M49.00 307.15 L52.00 305.55 L52.00 309.35 L49.00 310.95 Z" fill="#2a5cc0"/><path d="M46.00 305.55 L49.00 307.15 L52.00 305.55 L49.00 303.95 Z" fill="#9cc0f5"/>
<rect x="38" y="315.70" width="6.5" height="6.5" fill="#fff" stroke="#666" stroke-width="0.7"/><path d="M39.2 318.90 l1.6 1.8 l3 -4" stroke="#e0202a" stroke-width="1" fill="none"/>
<path d="M46.00 317.30 L49.00 315.70 L52.00 317.30 L52.00 321.10 L49.00 322.70 L46.00 321.10 Z" fill="#e8b82a"/><path d="M49.00 318.90 L52.00 317.30 L52.00 321.10 L49.00 322.70 Z" fill="#b98a10"/><path d="M46.00 317.30 L49.00 318.90 L52.00 317.30 L49.00 315.70 Z" fill="#f6d86a"/>
<path d="M30.5 330.65 h4.5 M32.75 328.40 v4.5" stroke="#666" stroke-width="0.8"/>
<path d="M37.5 330.65 l2.5 2.8 l4.8 -6" stroke="#9a9a9a" stroke-width="0.9" fill="none"/>
<path d="M45.26 328.20 L47.60 326.95 L49.94 328.20 L49.94 331.17 L47.60 332.41 L45.26 331.17 Z" fill="#e8b82a"/><path d="M47.60 329.45 L49.94 328.20 L49.94 331.17 L47.60 332.41 Z" fill="#b98a10"/><path d="M45.26 328.20 L47.60 329.45 L49.94 328.20 L47.60 326.95 Z" fill="#f6d86a"/><path d="M48.50 330.67 L50.90 329.39 L53.30 330.67 L53.30 333.71 L50.90 334.99 L48.50 333.71 Z" fill="#e8b82a"/><path d="M50.90 331.95 L53.30 330.67 L53.30 333.71 L50.90 334.99 Z" fill="#b98a10"/><path d="M48.50 330.67 L50.90 331.95 L53.30 330.67 L50.90 329.39 Z" fill="#f6d86a"/>
<rect x="184" y="257.15" width="1.2" height="6" fill="#777"/>
<rect x="184" y="315.90" width="1.2" height="6" fill="#777"/>
<path d="M184.6 280.65 v6" stroke="#ccc" stroke-width="1" stroke-dasharray="1 1"/>
<path d="M184.6 292.40 v6" stroke="#ccc" stroke-width="1" stroke-dasharray="1 1"/>
<path d="M184.6 304.15 v6" stroke="#ccc" stroke-width="1" stroke-dasharray="1 1"/>
<path d="M184.6 327.65 v6" stroke="#ccc" stroke-width="1" stroke-dasharray="1 1"/>
</svg>
<div class="a" style="left:18px;top:473.5px;width:168px;height:11px;background:#f0f0f0"></div>
<div class="a" style="left:29.3px;top:474.5px;width:85.2px;height:9px;background:#cdcdcd"></div>
<svg style="left:0;top:0" width="200" height="519"><path d="M24.6 476.8 l-1.6 2.2 l1.6 2.2 M179.6 476.8 l1.6 2.2 l-1.6 2.2" fill="none" stroke="#666" stroke-width="0.9"/><path d="M24 492.5 l2.2 2 l-2.2 2z M24 506 l2.2 2 l-2.2 2z" fill="#1f6f96"/></svg>
<div class="a" style="left:18px;top:485px;width:168px;height:1.5px;background:#d8d8d8"></div>
<div class="t" style="left:31.8px;top:489.7px;font-size:8.3px;color:#3a7fa6">Preview</div>
<div class="a" style="left:18px;top:500.5px;width:168px;height:1px;background:#e4e4e4"></div>
<div class="t" style="left:31.8px;top:503.3px;font-size:8.3px;color:#3a7fa6">Dependencies</div>
<div class="a" style="left:18px;top:514px;width:168px;height:1px;background:#e4e4e4"></div>

<!-- ===== Coffee machine ===== -->
<svg style="left:0;top:0" width="768" height="519">
 <defs>
  <linearGradient id="tankg" x1="0" x2="1"><stop offset="0" stop-color="#55646e"/><stop offset="0.2" stop-color="#5c6c78"/><stop offset="0.65" stop-color="#6f808d"/><stop offset="1" stop-color="#7d8e9b"/></linearGradient>
  <linearGradient id="jugg" x1="0" x2="1"><stop offset="0" stop-color="#708290"/><stop offset="0.3" stop-color="#7a8b98"/><stop offset="0.7" stop-color="#6c7d8a"/><stop offset="1" stop-color="#5f6f7b"/></linearGradient>
  <linearGradient id="knobg" x1="0" x2="1"><stop offset="0" stop-color="#9a9a9a"/><stop offset="0.4" stop-color="#e4e4e4"/><stop offset="1" stop-color="#aaaaaa"/></linearGradient>
  <radialGradient id="lidg" cx="0.45" cy="0.4" r="0.7"><stop offset="0" stop-color="#dde5e8"/><stop offset="0.7" stop-color="#cbd5d9"/><stop offset="1" stop-color="#aeb9be"/></radialGradient>
  <clipPath id="grclip"><path d="M413 410.5 L468 394 L498 409.5 L593.5 455 Q597 458 592 461 L540 474.5 Q535 476 531 473.5 L413.5 415 Q410 412.5 413 410.5Z"/></clipPath>
 </defs>
 <!-- tank -->
 <path d="M384.5 292 L444 300 L444 426 Q412 431 380 422 Z" fill="url(#tankg)"/>
 <path d="M383.5 290.5 Q420 294 444 303 L444 317 Q414 308 383.5 300 Z" fill="#bcd8e8"/>
 <path d="M383 300 Q414 308 444 317 L444 323.5 Q414 314 383 306 Z" fill="#6b7c88"/>
 <path d="M383 306.4 Q414 314.5 444 323.5" fill="none" stroke="#e3edf2" stroke-width="1"/>
 <!-- recess behind jug -->
 <path d="M443 310 L498 336 L498 412 L443 412 Z" fill="#6c7e8b"/>
 <path d="M445 322 L450 324 L450 330 L445 330 Z" fill="#dfe5e8"/>
 <!-- body silhouette -->
 <path d="M397.4 205 Q399 198.7 405 198.3 L592 143 L705.6 188.9 L729 198.5 Q735.5 201.5 736 208 L734 431 Q733 441.5 723.6 443.5 L546 502 Q539 505 532.8 501.7 L413.3 441 Q406.5 437.5 406.3 432 L404.7 414 Q404.6 408.5 410 406.5 L441 398.5 L441 384 L498 384 L498 345 L391 293.5 Q384.8 291 385.1 284.7 Z" fill="#0a0a0a"/>
 <path d="M399 203 Q400 198.7 405 198.3 L592 143 L705.6 188.9 L729 198.5 Q733 200.5 734.5 204 L545 258 Q538 260 531 266 L404 204 Z" fill="#131313"/>
 <!-- recess subtle -->
 <path d="M498 346 L606 360 L606 440 L593.5 455 L498 409.5 Z" fill="#0d0d0d"/>
 <path d="M584 357 Q600 362 612 372 M584 378 Q586 396 600 402 Q610 404 611 412 M612 405 v30" fill="none" stroke="#1a1a1a" stroke-width="0.8"/>
 <!-- top-right face highlight edge -->
 <path d="M534 263 Q538 259.5 545 258 L727 205.5" fill="none" stroke="#3a3a3a" stroke-width="4" opacity="0.35"/>
 <path d="M534 263 Q538 259.5 545 258 L727 205.5" fill="none" stroke="#3b3b3b" stroke-width="1.2" opacity="0.6"/>
 <!-- base rim lines -->
 <path d="M542 477.5 L728.4 419.3" stroke="#2e2a26" stroke-width="0.6" fill="none"/>
 <!-- cup warmer tray -->
 <path d="M472.5 178.6 L596 142 L610 150 L553.8 173 L492.2 189.4 Q487 190.5 483 186 Z" fill="#b7c0c4"/>
 <path d="M494 184 L570 162 L588 152 L585 149 L498 176 Q490 178 494 184 Z" fill="none" stroke="#d8e1e5" stroke-width="1.6"/>
 <!-- lid -->
 <ellipse cx="622" cy="184" rx="68" ry="28" fill="#060606"/>
 <ellipse cx="622.5" cy="174.6" rx="68.8" ry="30.3" fill="#b3bfc4"/>
 <ellipse cx="622" cy="172" rx="67.5" ry="27.8" fill="url(#lidg)"/>
 <ellipse cx="622" cy="171" rx="62" ry="19.5" fill="#d5dde0"/>
 <ellipse cx="622" cy="170" rx="56" ry="16" fill="#dbe3e6" opacity="0.9"/>
 <path d="M556 176 Q575 200 622 203 Q668 202 689 180" fill="none" stroke="#98a6ac" stroke-width="1.3"/>
 <path d="M558 185 Q590 206 622 205.5 Q660 205 688 186" fill="none" stroke="#c6d0d4" stroke-width="1"/>
 <path d="M560 158 Q590 146 626 145" fill="none" stroke="#e9eef0" stroke-width="1.2" opacity="0.8"/>
 <path d="M562 160 L600 147 L612 150 L572 165 Z" fill="#c2cbcf" opacity="0.5"/>
 <circle cx="624.5" cy="199.5" r="3.8" fill="#7890d0" opacity="0.9"/>
 <path d="M615.5 176 L619.5 152 L628.5 152.5 L624 177 Q619.5 179 615.5 176 Z" fill="#b5c0c5"/>
 <path d="M618.8 175 L622 153" stroke="#e6ecef" stroke-width="1.3"/>
 <circle cx="624.3" cy="150.7" r="4.8" fill="#c3ccd0"/><circle cx="623" cy="149.3" r="2.2" fill="#eef3f5"/>
 <!-- knob -->
 <rect x="692.2" y="184" width="14.2" height="17.5" fill="url(#knobg)"/>
 <ellipse cx="699.3" cy="184" rx="7.1" ry="2.3" fill="#f4f4f4"/>
 <path d="M695.5 186 v15 M699 186.5 v15 M702.5 186 v15" stroke="#8c8c8c" stroke-width="0.7"/>
 <!-- screen -->
 <path d="M402.5 202.5 Q404.5 200.5 408.5 202 L526.5 256.5 Q532.8 259.5 532.2 267 L523.8 342 Q522.5 351.5 515.5 349.8 L392.5 293 Q387.3 290.5 387.9 284.5 L399.5 207.5 Q400.2 204 402.5 202.5 Z" fill="#595d60" stroke="#0b0b0b" stroke-width="3.2" stroke-linejoin="round"/>
 <path d="M410 204.5 L525 257.5" stroke="#6f7376" stroke-width="0.7" fill="none"/>
 <!-- grate -->
 <path d="M412 409.5 L468 393.5 L498 409.5 L593.5 455 Q597 458 592 461 L541 474.5 Q536 476 532 473.5 L412.5 414.5 Q409 411.5 412 409.5Z" fill="#e1eaee"/>
 <clipPath id="grin"><path d="M420 412 L468 397.5 L498 412.5 L587 455.5 L538 470 L419 414 Z"/></clipPath>
 <g clip-path="url(#grin)">
  <path d="M400 399.3 L610 501.1" stroke="#3a4045" stroke-width="2"/>
  <path d="M400 394.6 L610 496.4" stroke="#3a4045" stroke-width="2"/>
  <path d="M400 389.9 L610 491.7" stroke="#3a4045" stroke-width="2"/>
  <path d="M400 385.2 L610 487.0" stroke="#3a4045" stroke-width="2"/>
  <path d="M400 380.5 L610 482.3" stroke="#3a4045" stroke-width="2"/>
  <path d="M400 375.8 L610 477.6" stroke="#3a4045" stroke-width="2"/>
  <path d="M400 371.1 L610 472.9" stroke="#3a4045" stroke-width="2"/>
  <path d="M400 366.4 L610 468.2" stroke="#3a4045" stroke-width="2"/>
  <path d="M400 361.7 L610 463.5" stroke="#3a4045" stroke-width="2"/>
  <path d="M462 444 L532 422" stroke="#e1eaee" stroke-width="3.5"/>
 </g>
 <!-- jug -->
 <path d="M497 376 L501 378 L501 409 L497 407 Z" fill="#cfd5d8"/>
 <path d="M441.5 334 Q442 328 446.5 328.5 Q455 326 472 329.5 Q489 333 496.5 338 L496.5 428 Q469 437.5 441.5 429.5 Z" fill="url(#jugg)"/>
 <path d="M446 328.5 Q456 326 472 329.5 Q488 333 495.5 338 Q486 337 479 341 Q470 347 463 345 Q453 336 446 328.5 Z" fill="#8a9aa5"/>
 <path d="M443 330 Q446 327 449 330 L462 344 Q470 348 479 341.5 Q487 337 496 338.5" fill="none" stroke="#dfe8ec" stroke-width="0.9"/>
 <path d="M447.5 340 Q451 380 463.5 398" fill="none" stroke="#8c9da8" stroke-width="1.5"/>
 <path d="M453 345 Q461 374 465 397" fill="none" stroke="#5d6d79" stroke-width="1.2"/>
</svg>

</div></body></html>
